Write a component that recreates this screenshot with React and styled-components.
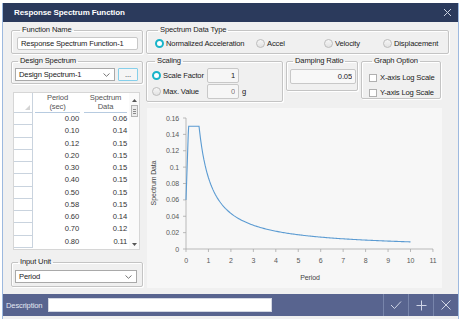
import React from 'react';
import styled, { createGlobalStyle } from 'styled-components';

const GlobalStyle = createGlobalStyle`
  html, body {
    margin: 0;
    padding: 0;
    background: #ffffff;
  }
  body {
    font-family: "Liberation Sans", Arial, sans-serif;
    font-size: 7.6px;
    letter-spacing: -0.15px;
    color: #222;
  }
  * {
    box-sizing: border-box;
  }
`;

const tableRows = [
    ['0.00', '0.06'],
    ['0.10', '0.14'],
    ['0.12', '0.15'],
    ['0.20', '0.15'],
    ['0.30', '0.15'],
    ['0.40', '0.15'],
    ['0.50', '0.15'],
    ['0.58', '0.15'],
    ['0.60', '0.14'],
    ['0.70', '0.12'],
    ['0.80', '0.11'],
];

// chart scale (panel coords)
const px = t => 39 + t * 22.45;
const py = v => 141 - v * 818.75;

const buildCurve = () => {
    const pts = [[0, 0.06], [0.1, 0.14], [0.12, 0.15], [0.58, 0.15]];
    for (let t = 0.6; t <= 10.001; t += 0.05) {
        pts.push([t, 0.087 / t]);
    }
    return pts.map((p, i) => `${i ? 'L' : 'M'}${px(p[0]).toFixed(2)},${py(p[1]).toFixed(2)}`).join(' ');
};

const Chevron = () => (
    <svg width="7" height="4" viewBox="0 0 7 4">
        <path d="M0.5 0.5 L3.5 3.3 L6.5 0.5" fill="none" stroke="#666" strokeWidth="0.9" />
    </svg>
);

const Chart = () => {
    const yTicks = [0, 0.02, 0.04, 0.06, 0.08, 0.1, 0.12, 0.14, 0.16];
    const xTicks = [0, 1, 2, 3, 4, 5, 6, 7, 8, 9, 10, 11];
    return (
        <svg width="295" height="180" viewBox="0 0 295 180">
            <line x1="39" y1="10" x2="39" y2="141" stroke="#a9a9a9" strokeWidth="0.8" />
            <line x1="39" y1="141" x2="286" y2="141" stroke="#a9a9a9" strokeWidth="0.8" />
            {yTicks.map(v => (
                <g key={v}>
                    <line x1="36" y1={py(v)} x2="39" y2={py(v)} stroke="#a9a9a9" strokeWidth="0.8" />
                    <text x="32" y={py(v) + 2.5} textAnchor="end" fontSize="7" fill="#595959">
                        {v === 0 ? '0' : v === 0.1 ? '0.1' : v.toFixed(2)}
                    </text>
                </g>
            ))}
            {xTicks.map(t => (
                <g key={t}>
                    <line x1={px(t)} y1="141" x2={px(t)} y2="144" stroke="#a9a9a9" strokeWidth="0.8" />
                    <text x={px(t)} y="155" textAnchor="middle" fontSize="7" fill="#595959">{t}</text>
                </g>
            ))}
            <path d={buildCurve()} fill="none" stroke="#5b9bd2" strokeWidth="1.1" />
            <text x="163" y="172" textAnchor="middle" fontSize="7" fill="#444">Period</text>
            <text transform="translate(9 75) rotate(-90)" textAnchor="middle" fontSize="7" fill="#444">Spectrum Data</text>
        </svg>
    );
};

const App = () => {
    return (
        <Window>
            <GlobalStyle />
            <TitleBar>
                <TitleText>Response Spectrum Function</TitleText>
                <svg width="9" height="9" viewBox="0 0 9 9">
                    <path d="M1 1 L8 8 M8 1 L1 8" stroke="#c9d0e0" strokeWidth="1" />
                </svg>
            </TitleBar>
            <Body>
                <LeftCol>
                    <Group>
                        <Legend>Function Name</Legend>
                        <Field $w={121} readOnly value="Response Spectrum Function-1" />
                    </Group>
                    <Group $pad="2px 3px 2px 3px">
                        <Legend>Design Spectrum</Legend>
                        <Inline>
                            <Dropdown $w={100}>
                                <span>Design Spectrum-1</span>
                                <Chevron />
                            </Dropdown>
                            <DotsButton>...</DotsButton>
                        </Inline>
                    </Group>
                    <Grid>
                        <Cells>
                            <CornerCell>
                                <svg width="5" height="5" viewBox="0 0 5 5">
                                    <path d="M5 0 L5 5 L0 5 Z" fill="#d4d4d4" />
                                </svg>
                            </CornerCell>
                            <HeadCell>Period<br />(sec)</HeadCell>
                            <HeadCell>Spectrum<br />Data</HeadCell>
                            {tableRows.map(r => (
                                <React.Fragment key={r[0]}>
                                    <RowHead />
                                    <NumCell $pr={3}>{r[0]}</NumCell>
                                    <NumCell $pr={2}>{r[1]}</NumCell>
                                </React.Fragment>
                            ))}
                        </Cells>
                        <ScrollBar>
                            <ArrowBox>
                                <svg width="5" height="3" viewBox="0 0 5 3"><path d="M0 3 L2.5 0 L5 3 Z" fill="#555" /></svg>
                            </ArrowBox>
                            <Thumb>
                                <Grip /><Grip /><Grip />
                            </Thumb>
                            <ArrowBox $bottom>
                                <svg width="5" height="3" viewBox="0 0 5 3"><path d="M0 0 L2.5 3 L5 0 Z" fill="#555" /></svg>
                            </ArrowBox>
                        </ScrollBar>
                    </Grid>
                    <Group $pad="3px 3px 3px 3px" $mt={5}>
                        <Legend>Input Unit</Legend>
                        <Dropdown $w={122}>
                            <span>Period</span>
                            <Chevron />
                        </Dropdown>
                    </Group>
                </LeftCol>
                <RightCol>
                    <Group $pad="0 4px 2px 8px">
                        <Legend>Spectrum Data Type</Legend>
                        <TypeRow>
                            <Option><RadioDot $on />Normalized Acceleration</Option>
                            <Option><RadioDot />Accel</Option>
                            <Option><RadioDot />Velocity</Option>
                            <Option><RadioDot />Displacement</Option>
                        </TypeRow>
                    </Group>
                    <OptionsRow>
                        <Group $w={137} $pad="2px 4px 2px 5px">
                            <Legend>Scaling</Legend>
                            <ScaleGrid>
                                <Option><RadioDot $on />Scale Factor</Option>
                                <Field $w={32} $h={15} $align="right" $bg="#f6f6f6" readOnly value="1" />
                                <span />
                                <Option><RadioDot />Max. Value</Option>
                                <Field $w={32} $h={15} $align="right" $bg="#f6f6f6" $muted readOnly value="0" />
                                <Unit>g</Unit>
                            </ScaleGrid>
                        </Group>
                        <Group $w={72} $pad="3px 3px 6px 3px">
                            <Legend>Damping Ratio</Legend>
                            <Field $w={66} $h={15} $align="right" $bg="#f8f8f8" readOnly value="0.05" />
                        </Group>
                        <Group $w={80} $pad="3px 3px 1px 7px">
                            <Legend>Graph Option</Legend>
                            <CheckList>
                                <Option><CheckBox />X-axis Log Scale</Option>
                                <Option><CheckBox />Y-axis Log Scale</Option>
                            </CheckList>
                        </Group>
                    </OptionsRow>
                    <ChartPanel>
                        <Chart />
                    </ChartPanel>
                </RightCol>
            </Body>
            <BottomBar>
                <DescLabel>Description</DescLabel>
                <DescInput readOnly value="" />
                <Spacer />
                <ActionButton>
                    <svg width="12" height="10" viewBox="0 0 12 10">
                        <path d="M1 5 L4.5 8.5 L11 1.5" fill="none" stroke="#cfd5e6" strokeWidth="1" />
                    </svg>
                </ActionButton>
                <ActionButton>
                    <svg width="11" height="11" viewBox="0 0 11 11">
                        <path d="M5.5 0.5 L5.5 10.5 M0.5 5.5 L10.5 5.5" stroke="#cfd5e6" strokeWidth="1" />
                    </svg>
                </ActionButton>
                <ActionButton>
                    <svg width="10" height="10" viewBox="0 0 10 10">
                        <path d="M0.5 0.5 L9.5 9.5 M9.5 0.5 L0.5 9.5" stroke="#cfd5e6" strokeWidth="1" />
                    </svg>
                </ActionButton>
            </BottomBar>
        </Window>
    );
};


const Window = styled.div`
    margin: 3px 0 0 2px;
    width: 457px;
    height: 316px;
    display: flex;
    flex-direction: column;
    background: #f0f0f0;
    border-left: 1px solid #9db9df;
    border-right: 1px solid #9db9df;
`;

const TitleBar = styled.div`
    height: 19px;
    flex: none;
    display: flex;
    align-items: center;
    justify-content: space-between;
    padding: 0 6px 0 11px;
    background: #2b3a5c;
`;

const TitleText = styled.div`
    color: #ffffff;
    font-weight: bold;
    font-size: 8px;
    letter-spacing: -0.1px;
`;

const Body = styled.div`
    flex: 1;
    display: flex;
    gap: 3px;
    padding: 3px 9px 0 8px;
`;

const LeftCol = styled.div`
    width: 132px;
    display: flex;
    flex-direction: column;
    gap: 2px;
`;

const RightCol = styled.div`
    width: 303px;
    display: flex;
    flex-direction: column;
`;

const Group = styled.fieldset`
    margin: ${p => p.$mt || 0}px 0 0 0;
    padding: ${p => p.$pad || '2px 4px 3px 5px'};
    width: ${p => (p.$w ? `${p.$w}px` : 'auto')};
    min-width: 0;
    border: 1px solid #c4c4c4;
    border-radius: 2px;
    box-shadow: inset 1px 1px 0 #ffffff, 1px 1px 0 #ffffff;
`;

const Legend = styled.legend`
    margin-left: 3px;
    padding: 0 2px;
    line-height: 10px;
    font-size: 7.6px;
    color: #222;
`;

const Field = styled.input`
    display: block;
    width: ${p => p.$w}px;
    height: ${p => p.$h || 13}px;
    padding: 0 3px;
    border: 1px solid #c8c8c8;
    border-radius: 2px;
    background: ${p => p.$bg || '#ffffff'};
    font: inherit;
    letter-spacing: inherit;
    color: ${p => (p.$muted ? '#7a7a7a' : '#222')};
    text-align: ${p => p.$align || 'left'};
    outline: none;
`;

const Inline = styled.div`
    display: flex;
    gap: 3px;
`;

const Dropdown = styled.div`
    width: ${p => p.$w}px;
    height: 13px;
    display: flex;
    align-items: center;
    justify-content: space-between;
    padding: 0 4px 0 3px;
    border: 1px solid #a9a9a9;
    background: #ffffff;
`;

const DotsButton = styled.div`
    width: 20px;
    height: 13px;
    display: flex;
    align-items: center;
    justify-content: center;
    border: 1px solid #86cfea;
    border-radius: 1px;
    background: #f5f5f5;
    color: #333;
    line-height: 8px;
`;

const Grid = styled.div`
    margin: 6px 0 0 2px;
    width: 127px;
    height: 158px;
    display: flex;
    border: 1px solid #d6d6d6;
    background: #ffffff;
`;

const Cells = styled.div`
    flex: 1;
    display: grid;
    grid-template-columns: 19px 49px 47px;
    grid-template-rows: 20px;
    grid-auto-rows: 12.25px;
    align-content: start;
    overflow: hidden;
`;

const CornerCell = styled.div`
    display: flex;
    align-items: flex-end;
    justify-content: flex-end;
    padding: 0 2px 2px 0;
    border-right: 1px solid #c9d3de;
    border-bottom: 1px solid #c9d3de;
`;

const HeadCell = styled.div`
    margin: 0 2px;
    display: flex;
    align-items: center;
    justify-content: center;
    text-align: center;
    line-height: 8.5px;
    color: #555;
    border-bottom: 1px solid #b7cbe0;
`;

const RowHead = styled.div`
    border-right: 1px solid #c9d3de;
    border-bottom: 1px solid #c9d3de;
`;

const NumCell = styled.div`
    text-align: right;
    padding-right: ${p => p.$pr}px;
    line-height: 12.25px;
    color: #333;
`;

const ScrollBar = styled.div`
    width: 10px;
    display: flex;
    flex-direction: column;
    align-items: center;
    background: #fafafa;
`;

const ArrowBox = styled.div`
    height: 10px;
    display: flex;
    align-items: center;
    justify-content: center;
    margin-top: ${p => (p.$bottom ? 'auto' : '2px')};
`;

const Thumb = styled.div`
    width: 7px;
    height: 12px;
    display: flex;
    flex-direction: column;
    justify-content: center;
    gap: 1px;
    padding: 0 1px;
    border: 1px solid #b4b4b4;
    background: #ececec;
`;

const Grip = styled.div`
    height: 1px;
    background: #8a8a8a;
`;

const TypeRow = styled.div`
    height: 16px;
    display: grid;
    grid-template-columns: 101px 68px 59px auto;
    align-items: center;
`;

const Option = styled.label`
    display: flex;
    align-items: center;
    gap: 2px;
    white-space: nowrap;
    color: #222;
`;

const RadioDot = styled.span`
    flex: none;
    width: 9px;
    height: 9px;
    border-radius: 50%;
    border: ${p => (p.$on ? '2px solid #19b4c9' : '1px solid #bdbdbd')};
    background: ${p => (p.$on ? '#ffffff' : 'linear-gradient(#f6f6f6, #e2e2e2)')};
`;

const CheckBox = styled.span`
    flex: none;
    width: 8px;
    height: 8px;
    margin-right: 1px;
    border: 1px solid #b0b0b0;
    background: #ffffff;
`;

const OptionsRow = styled.div`
    margin-top: 2px;
    display: flex;
    align-items: flex-start;
    gap: 3px;
`;

const ScaleGrid = styled.div`
    display: grid;
    grid-template-columns: 55px 32px auto;
    grid-auto-rows: 15px;
    row-gap: 1px;
    align-items: center;
`;

const Unit = styled.span`
    padding-left: 3px;
`;

const CheckList = styled.div`
    display: flex;
    flex-direction: column;
    gap: 6px;
    padding-top: 4px;
`;

const ChartPanel = styled.div`
    margin: 6px 0 0 1px;
    width: 295px;
    height: 180px;
    background: #f7f7f7;
`;

const BottomBar = styled.div`
    margin-top: 4px;
    margin-bottom: 3px;
    height: 22px;
    flex: none;
    display: flex;
    align-items: center;
    padding-left: 3px;
    background: #58648f;
`;

const DescLabel = styled.div`
    width: 42px;
    color: #e4e8f2;
    font-size: 7.6px;
`;

const DescInput = styled.input`
    width: 224px;
    height: 14px;
    border: 1px solid #d3d7e2;
    background: #ffffff;
    outline: none;
`;

const Spacer = styled.div`
    flex: 1;
`;

const ActionButton = styled.div`
    width: 25px;
    height: 22px;
    display: flex;
    align-items: center;
    justify-content: center;
    border-left: 1px solid #7885ab;
`;


export default App;
